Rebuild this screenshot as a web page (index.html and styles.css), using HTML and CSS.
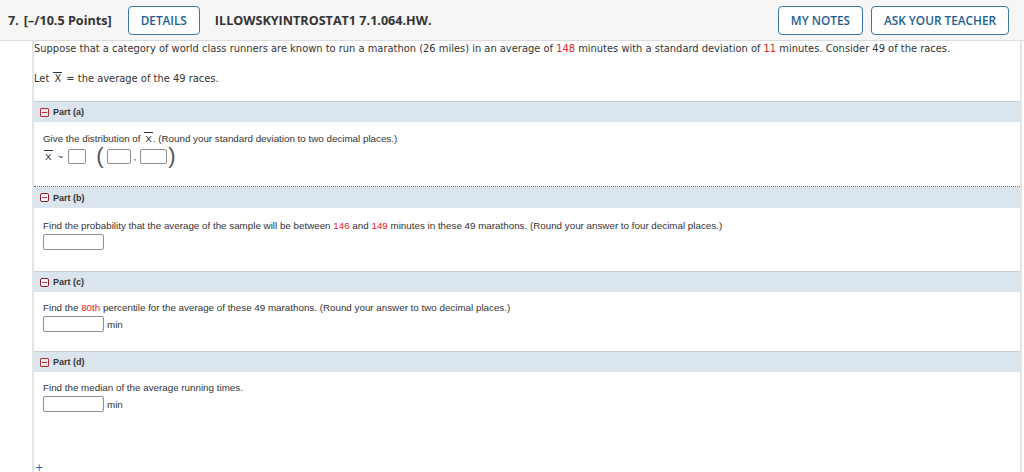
FILE: index.html
```html
<!DOCTYPE html>
<html lang="en">
<head>
    <meta charset="UTF-8">
    <link rel="stylesheet" href="styles.css">
</head>
<body>
    <!-- question header -->
    <div class="q-header">
        <span class="q-num">7.</span>
        <span class="q-points">[&ndash;/10.5 Points]</span>
        <button class="q-btn details-btn">DETAILS</button>
        <span class="q-code">ILLOWSKYINTROSTAT1 7.1.064.HW.</span>
        <div class="q-actions">
            <button class="q-btn">MY NOTES</button>
            <button class="q-btn">ASK YOUR TEACHER</button>
        </div>
    </div>

    <div class="q-body">
        <p class="intro">Suppose that a category of world class runners are known to run a marathon (26 miles) in an average of <span class="red">148</span> minutes with a standard deviation of <span class="red">11</span> minutes. Consider 49 of the races.</p>
        <p class="intro let">Let <span class="xbar">X</span> = the average of the 49 races.</p>

        <!-- Part (a) -->
        <div class="part first">
            <div class="part-head"><span class="toggle"></span>Part (a)</div>
            <div class="part-content">
                <div class="prompt">Give the distribution of <span class="xbar tight">X</span>. (Round your standard deviation to two decimal places.)</div>
                <div class="dist-row">
                    <span class="xbar">X</span>
                    <span class="tilde">~</span>
                    <span class="ans-box"></span>
                    <span class="paren open">(</span>
                    <span class="ans-box wide"></span>
                    <span class="comma">,</span>
                    <span class="ans-box wider"></span>
                    <span class="paren close">)</span>
                </div>
            </div>
        </div>

        <!-- Part (b) -->
        <div class="part dotted">
            <div class="part-head"><span class="toggle dark"></span>Part (b)</div>
            <div class="part-content">
                <div class="prompt">Find the probability that the average of the sample will be between <span class="red">146</span> and <span class="red">149</span> minutes in these 49 marathons. (Round your answer to four decimal places.)</div>
                <div class="answer-row"><span class="ans-input"></span></div>
            </div>
        </div>

        <!-- Part (c) -->
        <div class="part">
            <div class="part-head"><span class="toggle dark"></span>Part (c)</div>
            <div class="part-content">
                <div class="prompt">Find the <span class="red">80th</span> percentile for the average of these 49 marathons. (Round your answer to two decimal places.)</div>
                <div class="answer-row"><span class="ans-input"></span><span class="unit">min</span></div>
            </div>
        </div>

        <!-- Part (d) -->
        <div class="part last">
            <div class="part-head"><span class="toggle"></span>Part (d)</div>
            <div class="part-content">
                <div class="prompt">Find the median of the average running times.</div>
                <div class="answer-row"><span class="ans-input"></span><span class="unit">min</span></div>
            </div>
            <div class="plus">+</div>
        </div>
    </div>
</body>
</html>
```

FILE: styles.css
```css
* {
    box-sizing: border-box;
    margin: 0;
    padding: 0;
}

body {
    background: #fff;
    color: #333;
    font-family: "DejaVu Sans", Verdana, sans-serif;
    overflow: hidden;
}

/* header bar */
.q-header {
    display: flex;
    align-items: center;
    height: 41px;
    padding: 0 15px 0 8px;
    background: #f6f6f6;
    border-bottom: 1px solid #dcdcdc;
    font-family: "Open Sans", sans-serif;
    font-weight: 700;
    font-size: 12.6px;
    color: #333;
}

.q-num {
    margin-right: 5px;
}

.q-points {
    margin-right: 16px;
}

.q-btn {
    height: 29px;
    padding: 0 12px;
    border: 1px solid #3b77a5;
    border-radius: 4px;
    background: #fff;
    color: #1d5e91;
    font-family: "Open Sans", sans-serif;
    font-weight: 600;
    font-size: 11.8px;
    cursor: pointer;
}

.details-btn {
    margin-right: 15px;
}

.q-actions {
    margin-left: auto;
    display: flex;
    gap: 8px;
}

/* question body */
.q-body {
    margin-left: 32px;
    margin-right: 2px;
    border-left: 2px solid #e4e4e4;
    border-right: 2px solid #e4e4e4;
    min-height: 440px;
}

.intro {
    font-family: "DejaVu Sans Condensed", "DejaVu Sans", sans-serif;
    font-size: 11px;
    line-height: 14px;
    white-space: nowrap;
    padding-top: 1px;
}

.let {
    margin-top: 15px;
}

.red {
    color: #e8202a;
}

.xbar {
    display: inline-block;
    border-top: 1px solid #333;
    line-height: 11px;
    padding: 0 1px;
    margin: 0 1px;
}

.xbar.tight {
    margin-right: 0;
}

/* parts */
.part {
    border-top: 1px solid #cfcfcf;
}

.part.first {
    margin-top: 15px;
}

.part.dotted {
    border-top: 1px dotted #2b7cc7;
}

.part-head {
    display: flex;
    align-items: center;
    height: 20px;
    padding-left: 6px;
    background: #dbe5ee;
    font-family: "Liberation Sans", Arial, sans-serif;
    font-weight: 700;
    font-size: 9px;
    color: #333;
}

.part.dotted .part-head {
    height: 21px;
}

.toggle {
    position: relative;
    width: 9px;
    height: 9px;
    margin-right: 4px;
    border: 1px solid #b0303a;
    border-radius: 1px;
    background: #f6e6e6;
}

.toggle::after {
    content: "";
    position: absolute;
    left: 1px;
    right: 1px;
    top: 3px;
    height: 1px;
    background: #b0303a;
}

.toggle.dark {
    border-color: #8c1c24;
    border-width: 1.5px;
    background: #fff;
    border-radius: 2px;
}

.part-content {
    padding: 10px 0 19px 9px;
    font-family: "Liberation Sans", Arial, sans-serif;
    font-size: 9.8px;
    color: #333;
}

.part.dotted .part-content {
    padding: 12px 0 21px 9px;
}

.prompt {
    line-height: 12px;
}

.dist-row {
    display: flex;
    align-items: center;
    height: 22px;
}

.dist-row .xbar {
    margin: 0 5px 0 1px;
}

.tilde {
    margin-right: 5px;
}

.ans-box {
    display: inline-block;
    flex: 0 0 auto;
    width: 18px;
    height: 15px;
    border: 1px solid #8f8f8f;
    border-radius: 2px;
}

.ans-box.wide {
    width: 24px;
}

.ans-box.wider {
    width: 27px;
}

.paren {
    font-size: 22px;
    font-weight: 300;
    color: #555;
    line-height: 22px;
}

.paren.open {
    margin: 0 3px 0 10px;
}

.paren.close {
    margin-left: 1px;
}

.comma {
    margin: 0 4px 0 3px;
}

.answer-row {
    display: flex;
    align-items: center;
    margin-top: 2px;
    height: 16px;
}

.ans-input {
    display: inline-block;
    width: 61px;
    height: 16px;
    border: 1px solid #8f8f8f;
    border-radius: 2px;
}

.unit {
    margin-left: 3px;
}

.part.last .part-content {
    padding-bottom: 51px;
}

.plus {
    font-size: 10px;
    line-height: 10px;
    color: #2b5fc7;
    padding-left: 1px;
}
```
